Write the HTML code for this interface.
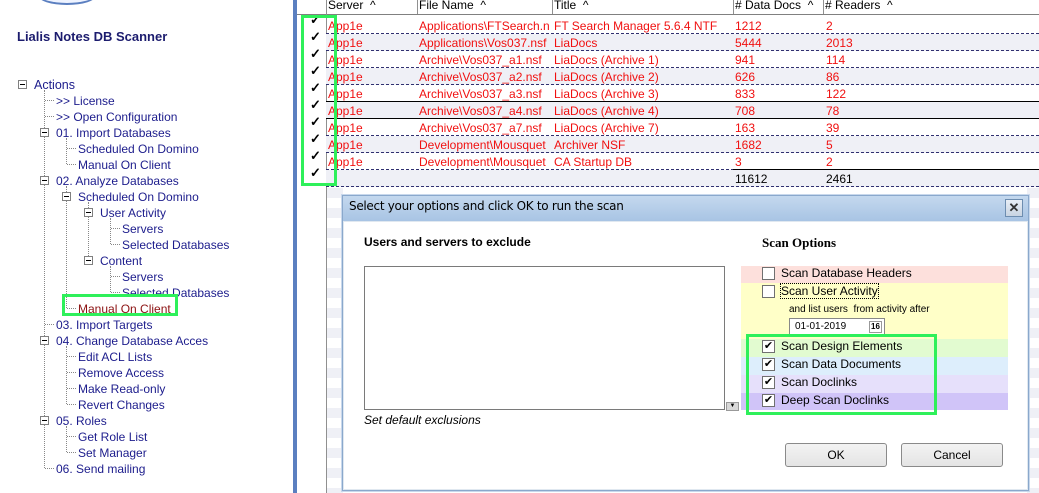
<!DOCTYPE html>
<html><head><meta charset="utf-8"><style>
*{margin:0;padding:0;box-sizing:border-box}
body{width:1039px;height:493px;overflow:hidden;background:#fff;font-family:"Liberation Sans",Arial,sans-serif;position:relative}
.a{position:absolute;white-space:nowrap}
.t{font-size:12px;color:#1c1c8c;line-height:14px;margin-top:1px}
.bx{position:absolute;width:9px;height:9px;border:1px solid #808080;background:#fff}
.bx:after{content:"";position:absolute;left:1px;top:3px;width:5px;height:1px;background:#000}
.vl{position:absolute;border-left:1px dotted #888;width:0}
.hl{position:absolute;border-top:1px dotted #888;height:0}
.r{font-size:12px;color:#f01010;line-height:14px}
.row{position:absolute;left:326px;width:713px;height:17px;border-bottom:1px dashed #303070}
.ck{position:absolute;font-size:13px;left:310px;color:#000;font-weight:bold}
.cb{position:absolute;width:13px;height:13px;border:1px solid #707070;background:#fff;font-size:11px;line-height:11px;text-align:center;color:#000}
.so{font-size:12px;color:#000;line-height:14px}
.btn{position:absolute;height:24px;border:1px solid #8a8a8a;border-radius:3px;background:linear-gradient(#f3f3f3,#e4e4e4);font-size:12px;text-align:center;line-height:22px}
</style></head><body>
<div class="a" style="left:38px;top:-14px;width:58px;height:19px;border-radius:50%;border:2px solid #5b7fc0;border-top:none;background:#eef3ff"></div>
<div class="a" style="left:17px;top:29px;font-size:13px;font-weight:bold;color:#1c1c6e">Lialis Notes DB Scanner</div>
<div class="vl" style="left:44px;top:90px;height:378px"></div>
<div class="vl" style="left:66px;top:138px;height:26px"></div>
<div class="vl" style="left:66px;top:186px;height:122px"></div>
<div class="vl" style="left:88px;top:202px;height:58px"></div>
<div class="vl" style="left:110px;top:218px;height:26px"></div>
<div class="vl" style="left:110px;top:266px;height:26px"></div>
<div class="vl" style="left:66px;top:346px;height:58px"></div>
<div class="vl" style="left:66px;top:426px;height:26px"></div>
<div class="bx" style="left:18px;top:80px"></div>
<div class="a t" style="left:34px;top:77px;font-size:12.5px">Actions</div>
<div class="hl" style="left:45px;top:100px;width:9px"></div><div class="a t" style="left:56px;top:93px">&gt;&gt; License</div>
<div class="hl" style="left:45px;top:116px;width:9px"></div><div class="a t" style="left:56px;top:109px">&gt;&gt; Open Configuration</div>
<div class="bx" style="left:40px;top:128px"></div><div class="a t" style="left:56px;top:125px">01. Import Databases</div>
<div class="hl" style="left:67px;top:148px;width:9px"></div><div class="a t" style="left:78px;top:141px">Scheduled On Domino</div>
<div class="hl" style="left:67px;top:164px;width:9px"></div><div class="a t" style="left:78px;top:157px">Manual On Client</div>
<div class="bx" style="left:40px;top:176px"></div><div class="a t" style="left:56px;top:173px">02. Analyze Databases</div>
<div class="bx" style="left:62px;top:192px"></div><div class="a t" style="left:78px;top:189px">Scheduled On Domino</div>
<div class="bx" style="left:84px;top:208px"></div><div class="a t" style="left:100px;top:205px">User Activity</div>
<div class="hl" style="left:111px;top:228px;width:9px"></div><div class="a t" style="left:122px;top:221px">Servers</div>
<div class="hl" style="left:111px;top:244px;width:9px"></div><div class="a t" style="left:122px;top:237px">Selected Databases</div>
<div class="bx" style="left:84px;top:256px"></div><div class="a t" style="left:100px;top:253px">Content</div>
<div class="hl" style="left:111px;top:276px;width:9px"></div><div class="a t" style="left:122px;top:269px">Servers</div>
<div class="hl" style="left:111px;top:292px;width:9px"></div><div class="a t" style="left:122px;top:285px">Selected Databases</div>
<div class="hl" style="left:67px;top:308px;width:9px"></div><div class="a t" style="left:78px;top:301px;color:#8b1010">Manual On Client</div>
<div class="a" style="left:62px;top:294px;width:116px;height:22px;border:3px solid #2ef05a"></div>
<div class="hl" style="left:45px;top:324px;width:9px"></div><div class="a t" style="left:56px;top:317px">03. Import Targets</div>
<div class="bx" style="left:40px;top:336px"></div><div class="a t" style="left:56px;top:333px">04. Change Database Acces</div>
<div class="hl" style="left:67px;top:356px;width:9px"></div><div class="a t" style="left:78px;top:349px">Edit ACL Lists</div>
<div class="hl" style="left:67px;top:372px;width:9px"></div><div class="a t" style="left:78px;top:365px">Remove Access</div>
<div class="hl" style="left:67px;top:388px;width:9px"></div><div class="a t" style="left:78px;top:381px">Make Read-only</div>
<div class="hl" style="left:67px;top:404px;width:9px"></div><div class="a t" style="left:78px;top:397px">Revert Changes</div>
<div class="bx" style="left:40px;top:416px"></div><div class="a t" style="left:56px;top:413px">05. Roles</div>
<div class="hl" style="left:67px;top:436px;width:9px"></div><div class="a t" style="left:78px;top:429px">Get Role List</div>
<div class="hl" style="left:67px;top:452px;width:9px"></div><div class="a t" style="left:78px;top:445px">Set Manager</div>
<div class="hl" style="left:45px;top:468px;width:9px"></div><div class="a t" style="left:56px;top:461px">06. Send mailing</div>

<div class="a" style="left:293px;top:0;width:4px;height:493px;background:#5b7fc0"></div>
<div class="a" style="left:297px;top:14px;width:742px;height:1px;background:#808080"></div>
<div class="a" style="left:326px;top:0;width:1px;height:493px;background:#909090"></div>
<div class="a" style="left:417px;top:0;width:1px;height:14px;background:#909090"></div>
<div class="a" style="left:552px;top:0;width:1px;height:14px;background:#909090"></div>
<div class="a" style="left:733px;top:0;width:1px;height:14px;background:#909090"></div>
<div class="a" style="left:823px;top:0;width:1px;height:14px;background:#909090"></div>
<div class="a" style="left:328px;top:-2px;font-size:12px">Server &nbsp;^</div>
<div class="a" style="left:419px;top:-2px;font-size:12px">File Name &nbsp;^</div>
<div class="a" style="left:554px;top:-2px;font-size:12px">Title &nbsp;^</div>
<div class="a" style="left:735px;top:-2px;font-size:12px"># Data Docs &nbsp;^</div>
<div class="a" style="left:825px;top:-2px;font-size:12px"># Readers &nbsp;^</div>
<div class="row" style="top:17px"></div>
<div class="row" style="top:34px;background:#eff0f6"></div>
<div class="row" style="top:51px"></div>
<div class="row" style="top:68px;background:#eff0f6"></div>
<div class="row" style="top:85px;border-bottom:1px solid #000"></div>
<div class="row" style="top:102px;background:#eff0f6;border-bottom:1px solid #000"></div>
<div class="row" style="top:119px"></div>
<div class="row" style="top:136px;background:#eff0f6"></div>
<div class="row" style="top:153px"></div>
<div class="row" style="top:170px;background:#eff0f6"></div>
<div class="a" style="left:733px;top:169px;width:306px;height:1px;background:#000"></div>
<div id="rows"></div>
<div class="a" style="left:301px;top:15px;width:36px;height:171px;border:3px solid #2ef05a"></div>
<div class="a" style="left:327px;top:188px;width:16px;height:305px;background:repeating-linear-gradient(#eff0f6 0 10px,#fff 10px 20px)"></div>
<div class="a" style="left:1027px;top:188px;width:12px;height:305px;background:repeating-linear-gradient(#eff0f6 0 10px,#fff 10px 20px)"></div>
<div class="a" style="left:342px;top:195px;width:687px;height:296px;border:1px solid #8aa8cc;background:#fff;box-shadow:0 0 0 1px #c8d8ec"></div>
<div class="a" style="left:343px;top:196px;width:685px;height:25px;background:linear-gradient(#c4d8ee,#a8c4e4)"></div>
<div class="a" style="left:349px;top:199px;font-family:'DejaVu Sans',sans-serif;font-size:12px;color:#000;letter-spacing:-0.3px">Select your options and click OK to run the scan</div>
<div class="a" style="left:1005px;top:199px;width:18px;height:18px;border:1px solid #6d8db0;background:linear-gradient(#e8eef6,#c8d4e2);font-size:13px;font-weight:bold;text-align:center;line-height:16px;color:#333">✕</div>
<div class="a" style="left:343px;top:221px;width:685px;height:269px;background:#fff;border:1px solid #e0e8f0"></div>
<div class="a" style="left:364px;top:235px;font-size:12px;font-weight:bold">Users and servers to exclude</div>
<div class="a" style="left:364px;top:266px;width:361px;height:144px;border:1px solid #7a7a7a"></div>
<div class="a" style="left:726px;top:402px;width:13px;height:9px;background:#d8d8d8;border:1px solid #999;font-size:6px;line-height:7px;text-align:center">▼</div>
<div class="a" style="left:364px;top:413px;font-size:12px;font-style:italic">Set default exclusions</div>
<div class="a" style="left:762px;top:235px;font-weight:bold;font-family:'Liberation Serif',serif;font-size:13px">Scan Options</div>
<div class="a" style="left:741px;top:266px;width:267px;height:17px;background:#fde0dc"></div>
<div class="a" style="left:741px;top:283px;width:267px;height:56px;background:#ffffc8"></div>
<div class="a" style="left:741px;top:339px;width:267px;height:18px;background:#e2fbd0"></div>
<div class="a" style="left:741px;top:357px;width:267px;height:18px;background:#ddeefc"></div>
<div class="a" style="left:741px;top:375px;width:267px;height:18px;background:#e6e0fb"></div>
<div class="a" style="left:741px;top:393px;width:267px;height:17px;background:#d0c4f8"></div>
<div class="cb" style="left:762px;top:267px"></div><div class="a so" style="left:781px;top:266px">Scan Database Headers</div>
<div class="cb" style="left:762px;top:285px"></div><div class="a so" style="left:781px;top:284px;outline:1px dotted #000">Scan User Activity</div>
<div class="a" style="left:789px;top:304px;font-size:10px">and list users&nbsp; from activity after</div>
<div class="a" style="left:789px;top:318px;width:96px;height:17px;border:1px solid #888;background:#fff;font-size:10px;line-height:15px;padding-left:5px">01-01-2019<span style="position:absolute;right:2px;top:2px;width:13px;height:12px;border:1px solid #999;font-size:8px;line-height:10px;text-align:center;font-weight:bold">16</span></div>
<div class="cb" style="left:762px;top:340px">✔</div><div class="a so" style="left:781px;top:339px">Scan Design Elements</div>
<div class="cb" style="left:762px;top:358px">✔</div><div class="a so" style="left:781px;top:357px">Scan Data Documents</div>
<div class="cb" style="left:762px;top:376px">✔</div><div class="a so" style="left:781px;top:375px">Scan Doclinks</div>
<div class="cb" style="left:762px;top:394px">✔</div><div class="a so" style="left:781px;top:393px">Deep Scan Doclinks</div>
<div class="a" style="left:746px;top:334px;width:191px;height:81px;border:3px solid #2ef05a"></div>
<div class="btn" style="left:785px;top:443px;width:102px">OK</div>
<div class="btn" style="left:901px;top:443px;width:102px">Cancel</div>
<script>
var d=[["Applications\\FTSearch.n","FT Search Manager 5.6.4 NTF","1212","2"],["Applications\\Vos037.nsf","LiaDocs","5444","2013"],["Archive\\Vos037_a1.nsf","LiaDocs (Archive 1)","941","114"],["Archive\\Vos037_a2.nsf","LiaDocs (Archive 2)","626","86"],["Archive\\Vos037_a3.nsf","LiaDocs (Archive 3)","833","122"],["Archive\\Vos037_a4.nsf","LiaDocs (Archive 4)","708","78"],["Archive\\Vos037_a7.nsf","LiaDocs (Archive 7)","163","39"],["Development\\Mousquet","Archiver NSF","1682","5"],["Development\\Mousquet","CA Startup DB","3","2"]];
var h="";
for(var i=0;i<10;i++){var y=19+17*i;h+='<div class="ck" style="top:'+(y-7)+'px">✓</div>';
if(i<9){var r=d[i];h+='<div class="a r" style="left:328px;top:'+y+'px">App1e</div><div class="a r" style="left:419px;top:'+y+'px;width:132px;overflow:hidden">'+r[0]+'</div><div class="a r" style="left:554px;top:'+y+'px">'+r[1]+'</div><div class="a r" style="left:735px;top:'+y+'px">'+r[2]+'</div><div class="a r" style="left:826px;top:'+y+'px">'+r[3]+'</div>';}
else h+='<div class="a" style="font-size:12px;line-height:14px;left:735px;top:'+y+'px">11612</div><div class="a" style="font-size:12px;line-height:14px;left:826px;top:'+y+'px">2461</div>';}
document.getElementById("rows").outerHTML=h;
</script>
</body></html>
